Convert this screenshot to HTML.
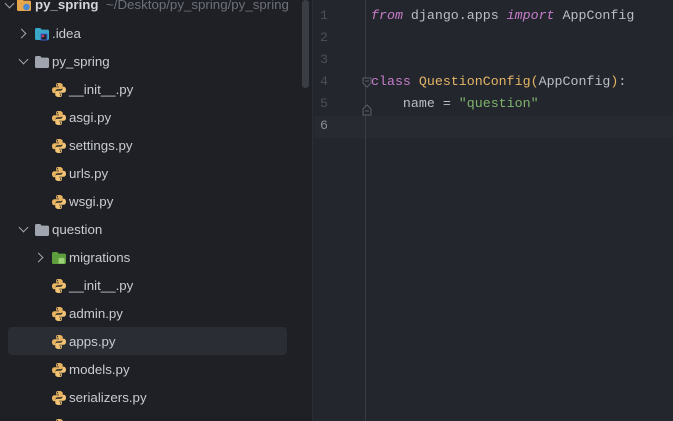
<!DOCTYPE html>
<html style="overflow:hidden;width:673px;height:421px"><head><meta charset="utf-8"><style>
*{margin:0;padding:0;box-sizing:border-box}
body{width:673px;height:421px;overflow:hidden;background:#23262d;position:relative;font-family:"Liberation Sans",sans-serif}
#side{position:absolute;left:0;top:0;width:313px;height:421px;background:#1e2025;border-right:1px solid #2b2e35;overflow:hidden}
.row{position:absolute;height:28px;line-height:28px;font-size:13.3px;color:#c9ccd3;white-space:nowrap}
.sel{position:absolute;left:8px;top:327px;width:279px;height:28px;background:#2a2d34;border-radius:4px}
.chev{position:absolute;width:7px;height:7px;border-right:1.5px solid #a0a4ab;border-bottom:1.5px solid #a0a4ab}
.down{transform:rotate(45deg)}
.right{transform:rotate(-45deg)}
.ic{position:absolute;top:6px}
#sb{position:absolute;left:302px;top:0;width:7px;height:88px;background:#3a3d44;border-radius:4px}
#ed{position:absolute;left:314px;top:0;right:0;height:421px;font-family:"Liberation Mono",monospace;font-size:13.3px;overflow:hidden}
.ln{position:absolute;left:6px;color:#4b4f57;line-height:22px;height:22px}
.code{position:absolute;left:57px;color:#bcbec4;line-height:22px;white-space:pre}
.kw{color:#c77dcc;font-style:italic}
.k2{color:#c77dcc}
.cl{color:#e5b565}
.st{color:#7fb36c}
#gut{position:absolute;left:51px;top:0;width:1px;height:421px;background:#393c43}
#cur{position:absolute;left:0;right:0;top:116px;height:22px;background:#272a31}
</style></head><body>
<div id="side">
<div class="sel"></div>
<svg width="0" height="0" style="position:absolute"><defs>
<symbol id="py" viewBox="0 0 16 16"><path d="M7.8 1C5 1 5 2.2 5 3v1.6h3v.6H3.3C2 5.2 1 6.3 1 8.2s1 3 2.3 3H4.5V9.5c0-1.3 1-2.3 2.3-2.3h3c1 0 1.900-.9 1.9-1.900V3c0-1.100-1.200-2-3.900-2z" fill="#e9b462"/><path d="M8.2 15c2.8 0 2.8-1.2 2.8-2v-1.6H8v-.6h4.7c1.3 0 2.3-1.1 2.3-3s-1-3-2.3-3h-1.2v1.7c0 1.3-1 2.3-2.3 2.3h-3c-1 0-1.9.9-1.9 1.9V13c0 1.1 1.2 2 3.9 2z" fill="#f3c374"/><circle cx="6.4" cy="2.8" r=".7" fill="#1e2025"/><circle cx="9.6" cy="13.2" r=".7" fill="#1e2025"/></symbol>
<symbol id="fd" viewBox="0 0 16 16"><path d="M1 3.5C1 2.7 1.6 2 2.4 2h3.8l1.5 1.6h5.9c.8 0 1.4.6 1.4 1.4v7.6c0 .8-.6 1.4-1.4 1.4H2.4c-.8 0-1.4-.6-1.4-1.4z" fill="#9fa4ae"/></symbol>
</defs></svg>
<div class="row" style="top:-9px;left:0;width:313px">
<div class="chev down" style="left:6px;top:9px"></div>
<svg class="ic" style="left:16px" width="16" height="16" viewBox="0 0 16 16"><path d="M1 3.5C1 2.7 1.6 2 2.4 2h3.8l1.5 1.6h5.9c.8 0 1.4.6 1.4 1.4v7.6c0 .8-.6 1.4-1.4 1.4H2.4c-.8 0-1.4-.6-1.4-1.4z" fill="#e6a64c"/><circle cx="10.5" cy="10" r="3.3" fill="#4a8ad0"/></svg>
<span style="position:absolute;left:35px;font-weight:bold;color:#d2d5db">py_spring</span>
<span style="position:absolute;left:106px;color:#6c7079">~/Desktop/py_spring/py_spring</span>
</div>
<div class="row" style="top:20px;left:0;width:313px">
<div class="chev right" style="left:18px;top:10px"></div>
<svg class="ic" style="left:34px" width="16" height="16" viewBox="0 0 16 16"><path d="M1 3.5C1 2.7 1.6 2 2.4 2h3.8l1.5 1.6h5.9c.8 0 1.4.6 1.4 1.4v7.6c0 .8-.6 1.4-1.4 1.4H2.4c-.8 0-1.4-.6-1.4-1.4z" fill="#3aa7c8"/><rect x="7" y="8" width="6" height="6" fill="#222" stroke="#3a5ed0"/><circle cx="9" cy="10" r="1.3" fill="#d03a5a"/></svg>
<span style="position:absolute;left:52px">.idea</span></div>
<div class="row" style="top:48px;left:0;width:313px"><div class="chev down" style="left:20px;top:8px"></div><svg class="ic" style="left:34px" width="16" height="16"><use href="#fd"/></svg><span style="position:absolute;left:52px">py_spring</span></div>
<div class="row" style="top:76px;left:0;width:313px"><svg class="ic" style="left:51px" width="16" height="16"><use href="#py"/></svg><span style="position:absolute;left:69px">__init__.py</span></div>
<div class="row" style="top:104px;left:0;width:313px"><svg class="ic" style="left:51px" width="16" height="16"><use href="#py"/></svg><span style="position:absolute;left:69px">asgi.py</span></div>
<div class="row" style="top:132px;left:0;width:313px"><svg class="ic" style="left:51px" width="16" height="16"><use href="#py"/></svg><span style="position:absolute;left:69px">settings.py</span></div>
<div class="row" style="top:160px;left:0;width:313px"><svg class="ic" style="left:51px" width="16" height="16"><use href="#py"/></svg><span style="position:absolute;left:69px">urls.py</span></div>
<div class="row" style="top:188px;left:0;width:313px"><svg class="ic" style="left:51px" width="16" height="16"><use href="#py"/></svg><span style="position:absolute;left:69px">wsgi.py</span></div>
<div class="row" style="top:216px;left:0;width:313px"><div class="chev down" style="left:20px;top:8px"></div><svg class="ic" style="left:34px" width="16" height="16"><use href="#fd"/></svg><span style="position:absolute;left:52px">question</span></div>
<div class="row" style="top:244px;left:0;width:313px"><div class="chev right" style="left:35px;top:10px"></div><svg class="ic" style="left:51px" width="16" height="16" viewBox="0 0 16 16"><path d="M1 3.5C1 2.7 1.6 2 2.4 2h3.8l1.5 1.6h5.9c.8 0 1.4.6 1.4 1.4v7.6c0 .8-.6 1.4-1.4 1.4H2.4c-.8 0-1.4-.6-1.4-1.4z" fill="#5f9e3c"/><ellipse cx="10.5" cy="9" rx="3" ry="1.2" fill="#9ed27a"/><rect x="7.5" y="9" width="6" height="4.5" fill="#9ed27a"/></svg><span style="position:absolute;left:69px">migrations</span></div>
<div class="row" style="top:272px;left:0;width:313px"><svg class="ic" style="left:51px" width="16" height="16"><use href="#py"/></svg><span style="position:absolute;left:69px">__init__.py</span></div>
<div class="row" style="top:300px;left:0;width:313px"><svg class="ic" style="left:51px" width="16" height="16"><use href="#py"/></svg><span style="position:absolute;left:69px">admin.py</span></div>
<div class="row" style="top:328px;left:0;width:313px"><svg class="ic" style="left:51px" width="16" height="16"><use href="#py"/></svg><span style="position:absolute;left:69px">apps.py</span></div>
<div class="row" style="top:356px;left:0;width:313px"><svg class="ic" style="left:51px" width="16" height="16"><use href="#py"/></svg><span style="position:absolute;left:69px">models.py</span></div>
<div class="row" style="top:384px;left:0;width:313px"><svg class="ic" style="left:51px" width="16" height="16"><use href="#py"/></svg><span style="position:absolute;left:69px">serializers.py</span></div>
<div class="row" style="top:412px;left:0;width:313px;height:9px;overflow:hidden"><svg class="ic" style="left:51px" width="16" height="16"><use href="#py"/></svg></div>
<div id="sb"></div>
</div>
<div id="ed">
<div id="cur"></div>
<div id="gut"></div>
<div class="ln" style="top:5px">1</div>
<div class="ln" style="top:27px">2</div>
<div class="ln" style="top:49px">3</div>
<div class="ln" style="top:71px">4</div>
<div class="ln" style="top:93px">5</div>
<div class="ln" style="top:115px;color:#8a8e96">6</div>
<div class="code" style="top:5px"><span class="kw">from</span> django.apps <span class="kw">import</span> AppConfig</div>
<div class="code" style="top:71px"><span class="k2">class</span> <span class="cl">QuestionConfig</span><span class="cl">(</span>AppConfig<span class="cl">)</span>:</div>
<div class="code" style="top:93px">    name = <span class="st">"question"</span></div>
<svg style="position:absolute;left:48px;top:77px" width="10" height="40" viewBox="0 0 10 40"><path d="M1 1h8v5l-4 4-4-4z" fill="#23262d" stroke="#5a5e66"/><line x1="3" y1="4" x2="7" y2="4" stroke="#5a5e66"/><path d="M1 38h8v-6l-4-4-4 4z" fill="#23262d" stroke="#5a5e66"/><line x1="3" y1="34" x2="7" y2="34" stroke="#5a5e66"/></svg>
</div>
</body></html>
